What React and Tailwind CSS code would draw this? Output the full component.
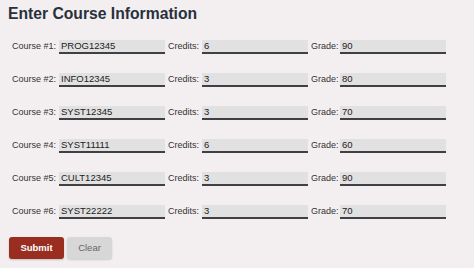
import React from "react";

const courses = [
  { code: "PROG12345", credits: "6", grade: "90" },
  { code: "INFO12345", credits: "3", grade: "80" },
  { code: "SYST12345", credits: "3", grade: "70" },
  { code: "SYST11111", credits: "6", grade: "60" },
  { code: "CULT12345", credits: "3", grade: "90" },
  { code: "SYST22222", credits: "3", grade: "70" },
];

function Field({ value }) {
  return (
    <input
      readOnly
      value={value}
      className="h-[14px] w-[106px] bg-[#e1e1e1] border-b-2 border-[#3f3f44] px-[2px] text-[9.5px] leading-[12px] text-[#222] outline-none"
    />
  );
}

export default function App() {
  return (
    <div className="h-[268px] w-full bg-[#f3eff0] font-['Liberation_Sans',Arial,sans-serif] text-[9px] text-[#333]">
      <h1 className="pl-[8px] pt-[3px] text-[15.7px] leading-[22px] font-bold text-[#28303c]">
        Enter Course Information
      </h1>

      <form className="mt-[5px] flex flex-col">
        {courses.map((c, i) => (
          <div key={i} className="flex h-[33px] items-center pl-[12px]">
            <label className="w-[47px]">Course #{i + 1}:</label>
            <Field value={c.code} />
            <label className="ml-[3px] w-[34px]">Credits:</label>
            <Field value={c.credits} />
            <label className="ml-[3px] w-[29px]">Grade:</label>
            <Field value={c.grade} />
          </div>
        ))}

        <div className="mt-[9px] flex gap-[3px] pl-[9px]">
          <button
            type="button"
            className="h-[22px] w-[55px] rounded-[3px] bg-[#982d20] text-[9.5px] font-bold text-white shadow-[0_1px_2px_rgba(0,0,0,0.2)]"
          >
            Submit
          </button>
          <button
            type="button"
            className="h-[22px] w-[45px] rounded-[3px] bg-[#d7d7d7] text-[9.5px] text-[#666] shadow-[0_1px_2px_rgba(0,0,0,0.15)]"
          >
            Clear
          </button>
        </div>
      </form>
    </div>
  );
}
